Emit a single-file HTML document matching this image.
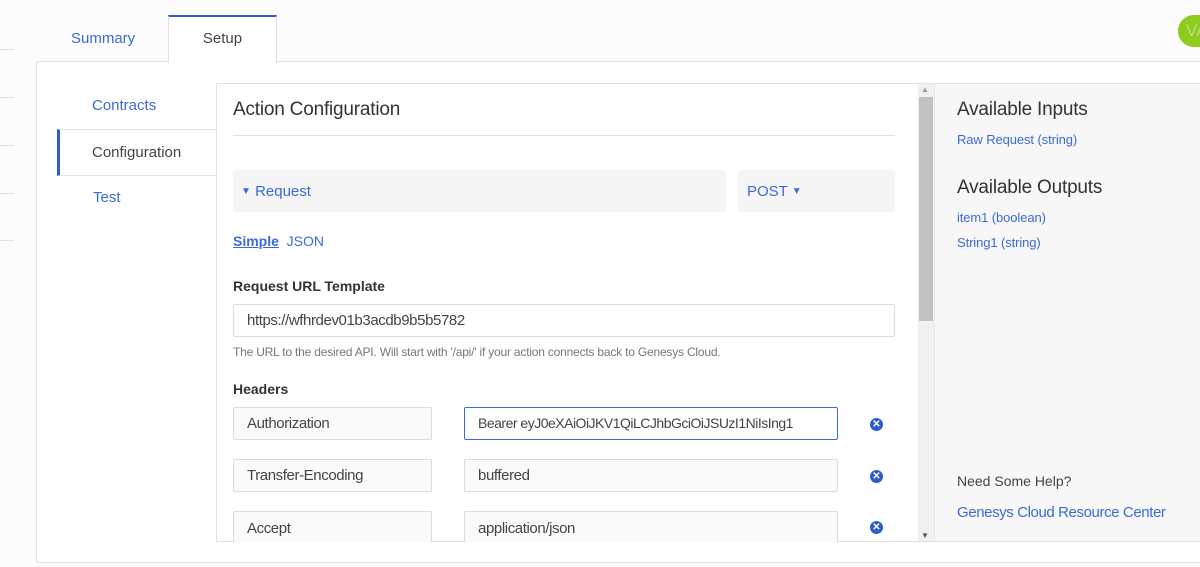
<!DOCTYPE html>
<html><head><style>
*{margin:0;padding:0;box-sizing:border-box}
body{width:1200px;height:567px;background:#fcfcfc;font-family:"Liberation Sans",Arial,sans-serif;position:relative;overflow:hidden;color:#333}
.a{position:absolute}
.lnk{color:#3b6bd6}
.inp{position:absolute;background:#fafafa;border:1px solid #dcdcdc;border-radius:2px;font-size:15px;letter-spacing:-0.4px;color:#444;padding-left:13px;line-height:33px;white-space:nowrap;overflow:hidden}
.x{position:absolute;width:13px;height:13px;border-radius:50%;background:#2e5cc8;color:#fff;font-size:10px;font-weight:bold;line-height:13px;text-align:center}
</style></head><body>
<div class="a" style="left:0;top:49px;width:14px;border-top:1px solid #e2e2e2"></div>
<div class="a" style="left:0;top:97px;width:14px;border-top:1px solid #e2e2e2"></div>
<div class="a" style="left:0;top:145px;width:14px;border-top:1px solid #e2e2e2"></div>
<div class="a" style="left:0;top:193px;width:14px;border-top:1px solid #e2e2e2"></div>
<div class="a" style="left:0;top:240px;width:14px;border-top:1px solid #e2e2e2"></div>

<div class="a lnk" style="left:71px;top:30px;font-size:15px">Summary</div>
<div class="a" style="left:36px;top:61px;width:1164px;height:502px;background:#fff;border:1px solid #e0e0e0;border-right:none"></div>
<div class="a" style="left:168px;top:15px;width:109px;height:48px;background:#fff;border:1px solid #e0e0e0;border-top:2px solid #2e5cc8;border-bottom:none;font-size:15px;text-align:center;line-height:44px;color:#444">Setup</div>
<div class="a" style="left:1178px;top:15px;width:40px;height:32px;border-radius:16px;background:#8fcb1f;color:#b8e07a;font-size:17px;line-height:32px;padding-left:8px">VA</div>

<div class="a lnk" style="left:92px;top:97px;font-size:15px">Contracts</div>
<div class="a" style="left:57px;top:129px;width:159px;height:47px;border-top:1px solid #e2e2e2;border-bottom:1px solid #e2e2e2;border-left:3px solid #2e5cc8"></div>
<div class="a" style="left:92px;top:144px;font-size:15px;color:#444">Configuration</div>
<div class="a lnk" style="left:93px;top:189px;font-size:15px">Test</div>

<div class="a" style="left:216px;top:83px;width:984px;height:459px;border-top:1px solid #e0e0e0;border-left:1px solid #e0e0e0;border-bottom:1px solid #e0e0e0"></div>
<div class="a" style="left:233px;top:99px;font-size:19px;color:#333;letter-spacing:-0.2px">Action Configuration</div>
<div class="a" style="left:233px;top:135px;width:662px;border-top:1px solid #dedede"></div>
<div class="a" style="left:233px;top:170px;width:493px;height:42px;background:#f5f5f5;border-radius:3px"></div>
<div class="a lnk" style="left:241px;top:183px;font-size:15px"><span style="font-size:10px;vertical-align:2px">▼</span> Request</div>
<div class="a" style="left:738px;top:170px;width:157px;height:42px;background:#f5f5f5;border-radius:3px"></div>
<div class="a lnk" style="left:747px;top:183px;font-size:15px">POST <span style="font-size:10px;vertical-align:2px">▼</span></div>
<div class="a" style="left:233px;top:233px;font-size:14px"><b class="lnk" style="text-decoration:underline">Simple</b> <span class="lnk">&nbsp;JSON</span></div>
<div class="a" style="left:233px;top:278px;font-size:14px;font-weight:bold;color:#333">Request URL Template</div>
<div class="inp" style="left:233px;top:304px;width:662px;height:33px;background:#fff;line-height:31px">https://wfhrdev01b3acdb9b5b5782</div>
<div class="a" style="left:233px;top:345px;font-size:12px;color:#777;letter-spacing:-0.2px">The URL to the desired API. Will start with '/api/' if your action connects back to Genesys Cloud.</div>
<div class="a" style="left:233px;top:381px;font-size:14px;font-weight:bold;color:#333">Headers</div>
<div class="inp" style="left:233px;top:407px;width:199px;height:33px;line-height:31px">Authorization</div>
<div class="inp" style="left:464px;top:407px;width:374px;height:33px;line-height:31px;background:#fff;border-color:#3b6bd6;font-size:14px;letter-spacing:-0.5px">Bearer eyJ0eXAiOiJKV1QiLCJhbGciOiJSUzI1NiIsIng1</div>
<div class="x" style="left:870px;top:418px">✕</div>
<div class="inp" style="left:233px;top:459px;width:199px;height:33px;line-height:31px">Transfer-Encoding</div>
<div class="inp" style="left:464px;top:459px;width:374px;height:33px;line-height:31px">buffered</div>
<div class="x" style="left:870px;top:470px">✕</div>
<div class="inp" style="left:233px;top:511px;width:199px;height:31px;border-bottom:none">Accept</div>
<div class="inp" style="left:464px;top:511px;width:374px;height:31px;border-bottom:none">application/json</div>
<div class="x" style="left:870px;top:521px">✕</div>

<div class="a" style="left:918px;top:84px;width:16px;height:457px;background:#f0f0f0"></div>
<div class="a" style="left:919px;top:97px;width:14px;height:224px;background:#c1c1c1"></div>
<div class="a" style="left:921px;top:85px;font-size:8px;color:#999">▲</div>
<div class="a" style="left:921px;top:531px;font-size:8px;color:#555">▼</div>

<div class="a" style="left:934px;top:84px;width:266px;height:457px;background:#f7f7f7;border-left:1px solid #e6e6e6"></div>
<div class="a" style="left:957px;top:99px;font-size:19px;color:#333;letter-spacing:-0.2px">Available Inputs</div>
<div class="a lnk" style="left:957px;top:132px;font-size:13px;letter-spacing:-0.1px">Raw Request (string)</div>
<div class="a" style="left:957px;top:177px;font-size:19px;color:#333;letter-spacing:-0.2px">Available Outputs</div>
<div class="a lnk" style="left:957px;top:210px;font-size:13px;letter-spacing:-0.1px">item1 (boolean)</div>
<div class="a lnk" style="left:957px;top:235px;font-size:13px;letter-spacing:-0.1px">String1 (string)</div>
<div class="a" style="left:957px;top:473px;font-size:14px;color:#444">Need Some Help?</div>
<div class="a lnk" style="left:957px;top:504px;font-size:15px;letter-spacing:-0.4px">Genesys Cloud Resource Center</div>
</body></html>
